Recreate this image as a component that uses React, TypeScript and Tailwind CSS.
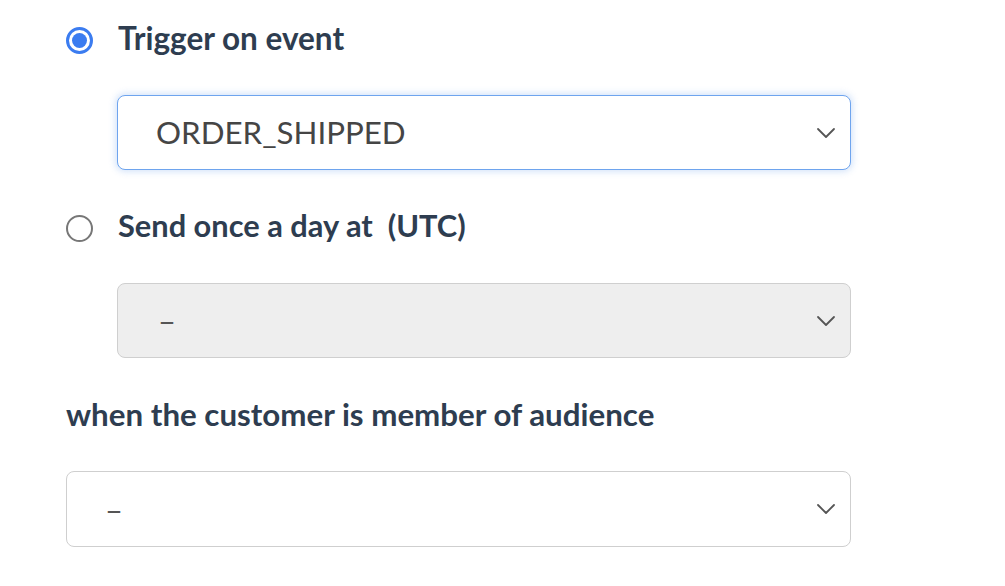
import React from "react";

const Chevron = () => (
  <svg width="20" height="12" viewBox="0 0 20 12" fill="none" stroke="#555" strokeWidth="1.8" strokeLinecap="round" strokeLinejoin="round">
    <path d="M2 2l8 8 8-8" />
  </svg>
);

export default function App() {
  return (
    <div className="w-[1005px] h-[586px] bg-white pl-[66px] pt-[20px]" style={{ fontFamily: "Lato, 'Noto Sans', sans-serif" }}>
      <div className="w-[785px] flex flex-col">
        <label className="flex items-center h-[40px] gap-[25px]">
          <span className="w-[27px] h-[27px] rounded-full border-[3px] border-[#3b7cf0] flex items-center justify-center">
            <span className="w-[15px] h-[15px] rounded-full bg-[#3b7cf0]" />
          </span>
          <span className="text-[31.5px] font-bold text-[#2e3d50] leading-none -mt-[3px]">Trigger on event</span>
        </label>
        <div className="ml-[51px] mt-[35px] h-[75px] rounded-[8px] border-[1.5px] border-[#6ea4ee] shadow-[0_0_6px_2px_rgba(120,170,240,0.3)] bg-white flex items-center justify-between pl-[38px] pr-[14px]">
          <span className="text-[31.3px] font-normal text-[#454545] leading-none">ORDER_SHIPPED</span>
          <Chevron />
        </div>
        <label className="flex items-center h-[40px] gap-[25px] mt-[38px]">
          <span className="w-[27px] h-[27px] rounded-full border-[2px] border-[#777]" />
          <span className="text-[30.8px] font-bold text-[#2e3d50] whitespace-pre leading-none -mt-[3px]">Send once a day at  (UTC)</span>
        </label>
        <div className="ml-[51px] mt-[35px] h-[75px] rounded-[8px] border-[1.5px] border-[#cfcfcf] bg-[#eeeeee] flex items-center justify-between pl-[40px] pr-[14px]">
          <span className="text-[31px] text-[#555] leading-none">–</span>
          <Chevron />
        </div>
        <div className="mt-[38px] h-[40px] flex items-center">
          <span className="text-[31.3px] font-bold text-[#2e3d50] leading-none -mt-[3px]">when the customer is member of audience</span>
        </div>
        <div className="mt-[35px] h-[76px] rounded-[8px] border-[1.5px] border-[#cfcfcf] bg-white flex items-center justify-between pl-[38px] pr-[14px]">
          <span className="text-[31px] text-[#555] leading-none">–</span>
          <Chevron />
        </div>
      </div>
    </div>
  );
}
